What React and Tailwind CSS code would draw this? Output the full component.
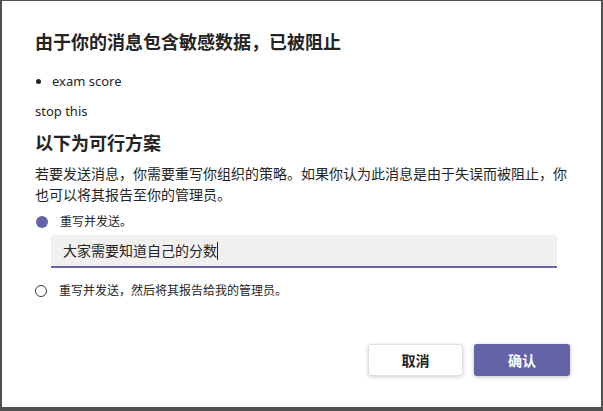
function Radio({checked}) {
  return checked ? (
    <span className="w-[12px] h-[12px] rounded-full bg-[#6264a7] shrink-0" />
  ) : (
    <span className="w-[12px] h-[12px] rounded-full border border-[#3b3a39] shrink-0" />
  );
}

export default function App() {
  return (
    <div
      className="w-[603px] h-[411px] bg-[#505050] pl-[2px] pr-[2px] pt-[1px] pb-[4px]"
      style={{fontFamily: '"Noto Sans", "Noto Sans CJK SC", sans-serif'}}
    >
      <div className="w-full h-full bg-white text-[#252423] pl-[33px] pr-[31px] pt-[29px]">
        <h2 className="text-[18px] leading-[24px] font-bold">
          由于你的消息包含敏感数据，已被阻止
        </h2>

        <ul className="mt-[17px]">
          <li className="flex items-center text-[13px] leading-[20px]">
            <span className="w-[5px] h-[5px] rounded-full bg-[#252423] ml-[1px] mr-[11px]" />
            <span>exam score</span>
          </li>
        </ul>

        <p className="mt-[10px] text-[13px] leading-[20px]">stop this</p>

        <h3 className="mt-[10px] text-[18px] leading-[24px] font-bold">以下为可行方案</h3>

        <p className="mt-[8px] text-[14px] leading-[21px] pr-[2px]">
          若要发送消息，你需要重写你组织的策略。如果你认为此消息是由于失误而被阻止，你也可以将其报告至你的管理员。
        </p>

        <label className="mt-[8px] flex items-center gap-[12px] pl-[1px] text-[12px] leading-[18px]">
          <Radio checked />
          <span>重写并发送。</span>
        </label>

        <div className="mt-[4px] ml-[16px] w-[506px] h-[33px] bg-[#f1f0ef] rounded-t-[3px] border-b-2 border-[#6264a7] flex items-center px-[12px] text-[14px]">
          <span>大家需要知道自己的分数</span>
          <span className="w-px h-[18px] bg-[#252423]" />
        </div>

        <label className="mt-[14px] flex items-center gap-[12px] text-[12px] leading-[18px]">
          <Radio />
          <span>重写并发送，然后将其报告给我的管理员。</span>
        </label>

        <div className="mt-[44px] flex justify-end gap-[11px]">
          <button className="w-[95px] h-[32px] bg-white border border-[#e1dfdd] rounded-[3px] shadow-[0_1px_4px_rgba(0,0,0,0.18)] text-[14px] font-bold text-[#252423]">
            取消
          </button>
          <button className="w-[96px] h-[32px] bg-[#6264a7] rounded-[3px] shadow-[0_1px_4px_rgba(0,0,0,0.25)] text-[14px] font-bold text-white">
            确认
          </button>
        </div>
      </div>
    </div>
  );
}
